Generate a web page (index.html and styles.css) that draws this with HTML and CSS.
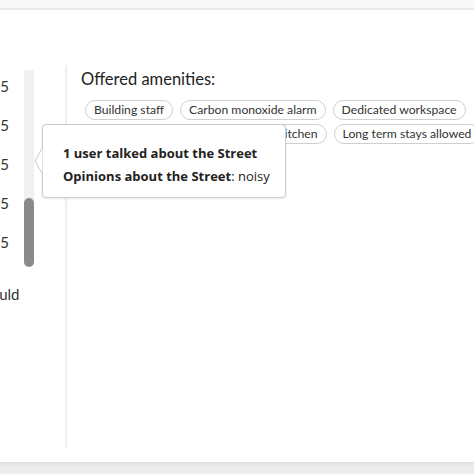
FILE: index.html
```html
<!DOCTYPE html>
<html>
<head>
<meta charset="utf-8">
<link rel="stylesheet" href="styles.css">
</head>
<body>
<div class="topbar"></div>
<div class="content">
  <div class="left">
    <div class="nums">
      <div class="score">4.5</div>
      <div class="score">4.5</div>
      <div class="score">4.5</div>
      <div class="score">4.5</div>
      <div class="score">4.5</div>
      <div class="word">would</div>
    </div>
    <div class="track"><div class="thumb"></div></div>
  </div>
  <div class="right">
    <div class="heading">Offered amenities:</div>
    <div class="chips">
      <span class="chip">Building staff</span>
      <span class="chip">Carbon monoxide alarm</span>
      <span class="chip">Dedicated workspace</span>
      <span class="chip">Elevator</span>
      <span class="chip">Heating</span>
      <span class="chip">Iron</span>
      <span class="chip">Kitchen</span>
      <span class="chip">Long term stays allowed</span>
    </div>
  </div>
</div>
<div class="bottombar"></div>
<div class="tooltip">
  <svg class="arrow" width="10" height="28" viewBox="0 0 10 28"><polygon points="9,0 1,14 9,28" fill="#fff" stroke="#c9c9c9" stroke-width="1"/><rect x="9" y="0" width="2" height="28" fill="#fff"/></svg>
  <div class="tline"><b>1 user talked about the Street</b></div>
  <div class="tline"><b>Opinions about the Street</b>: noisy</div>
</div>
</body>
</html>
```
FILE: styles.css
```css
html, body {
  margin: 0;
  padding: 0;
  width: 474px;
  height: 474px;
  overflow: hidden;
  background: #fff;
  color: #222;
  font-family: Lato, "Open Sans", sans-serif;
  position: relative;
}
.topbar {
  height: 8px;
  background: #f8f8f8;
  border-bottom: 2px solid #e8e8e8;
}
.content {
  margin-top: 55px;
  height: 383px;
  display: flex;
}
.left {
  width: 65px;
  display: flex;
  flex-shrink: 0;
}
.nums {
  width: 24px;
  overflow: hidden;
  font-size: 15px;
  color: #333;
  padding-top: 2px;
}
.score {
  margin-left: -12px;
  line-height: 39px;
  height: 39px;
  white-space: nowrap;
}
.word {
  margin-left: -21px;
  line-height: 20px;
  margin-top: 22px;
  white-space: nowrap;
}
.track {
  width: 10px;
  height: 197px;
  margin-top: 5px;
  background: #f0f0f0;
  border-radius: 2px 2px 5px 5px;
  display: flex;
  flex-direction: column;
  justify-content: flex-end;
}
.thumb {
  height: 69px;
  background: #8a8a8a;
  border-radius: 5px;
}
.right {
  border-left: 2px solid #efefef;
  padding-left: 14px;
  flex: 1;
  overflow: hidden;
}
.heading {
  font-size: 16.5px;
  line-height: 20px;
  padding-top: 4px;
  color: #222;
}
.chips {
  margin-top: 11px;
  margin-left: 4px;
  width: 420px;
  display: flex;
  flex-wrap: wrap;
  gap: 4px 7px;
}
.chip {
  display: inline-block;
  border: 1px solid #cfcfcf;
  border-radius: 11px;
  padding: 0 8px;
  font-size: 12.2px;
  line-height: 18px;
  color: #333;
  background: #fff;
  white-space: nowrap;
}
.bottombar {
  margin-top: 14px;
  height: 12px;
  background: linear-gradient(#dedede, #ececec 35%, #eeeeee);
}
.tooltip {
  position: absolute;
  left: 42px;
  top: 124px;
  width: 222px;
  height: 72px;
  padding: 0 0 0 20px;
  border: 1px solid #c9c9c9;
  border-radius: 4px;
  background: #fff;
  box-shadow: 0 1px 3px rgba(0,0,0,0.08);
  font-family: "Open Sans", sans-serif;
  font-size: 13px;
  color: #222;
  box-sizing: content-box;
}
.tooltip .tline:first-of-type {
  margin-top: 17px;
}
.tline {
  line-height: 23px;
  white-space: nowrap;
}
.arrow {
  position: absolute;
  left: -9px;
  top: 22px;
}
```
